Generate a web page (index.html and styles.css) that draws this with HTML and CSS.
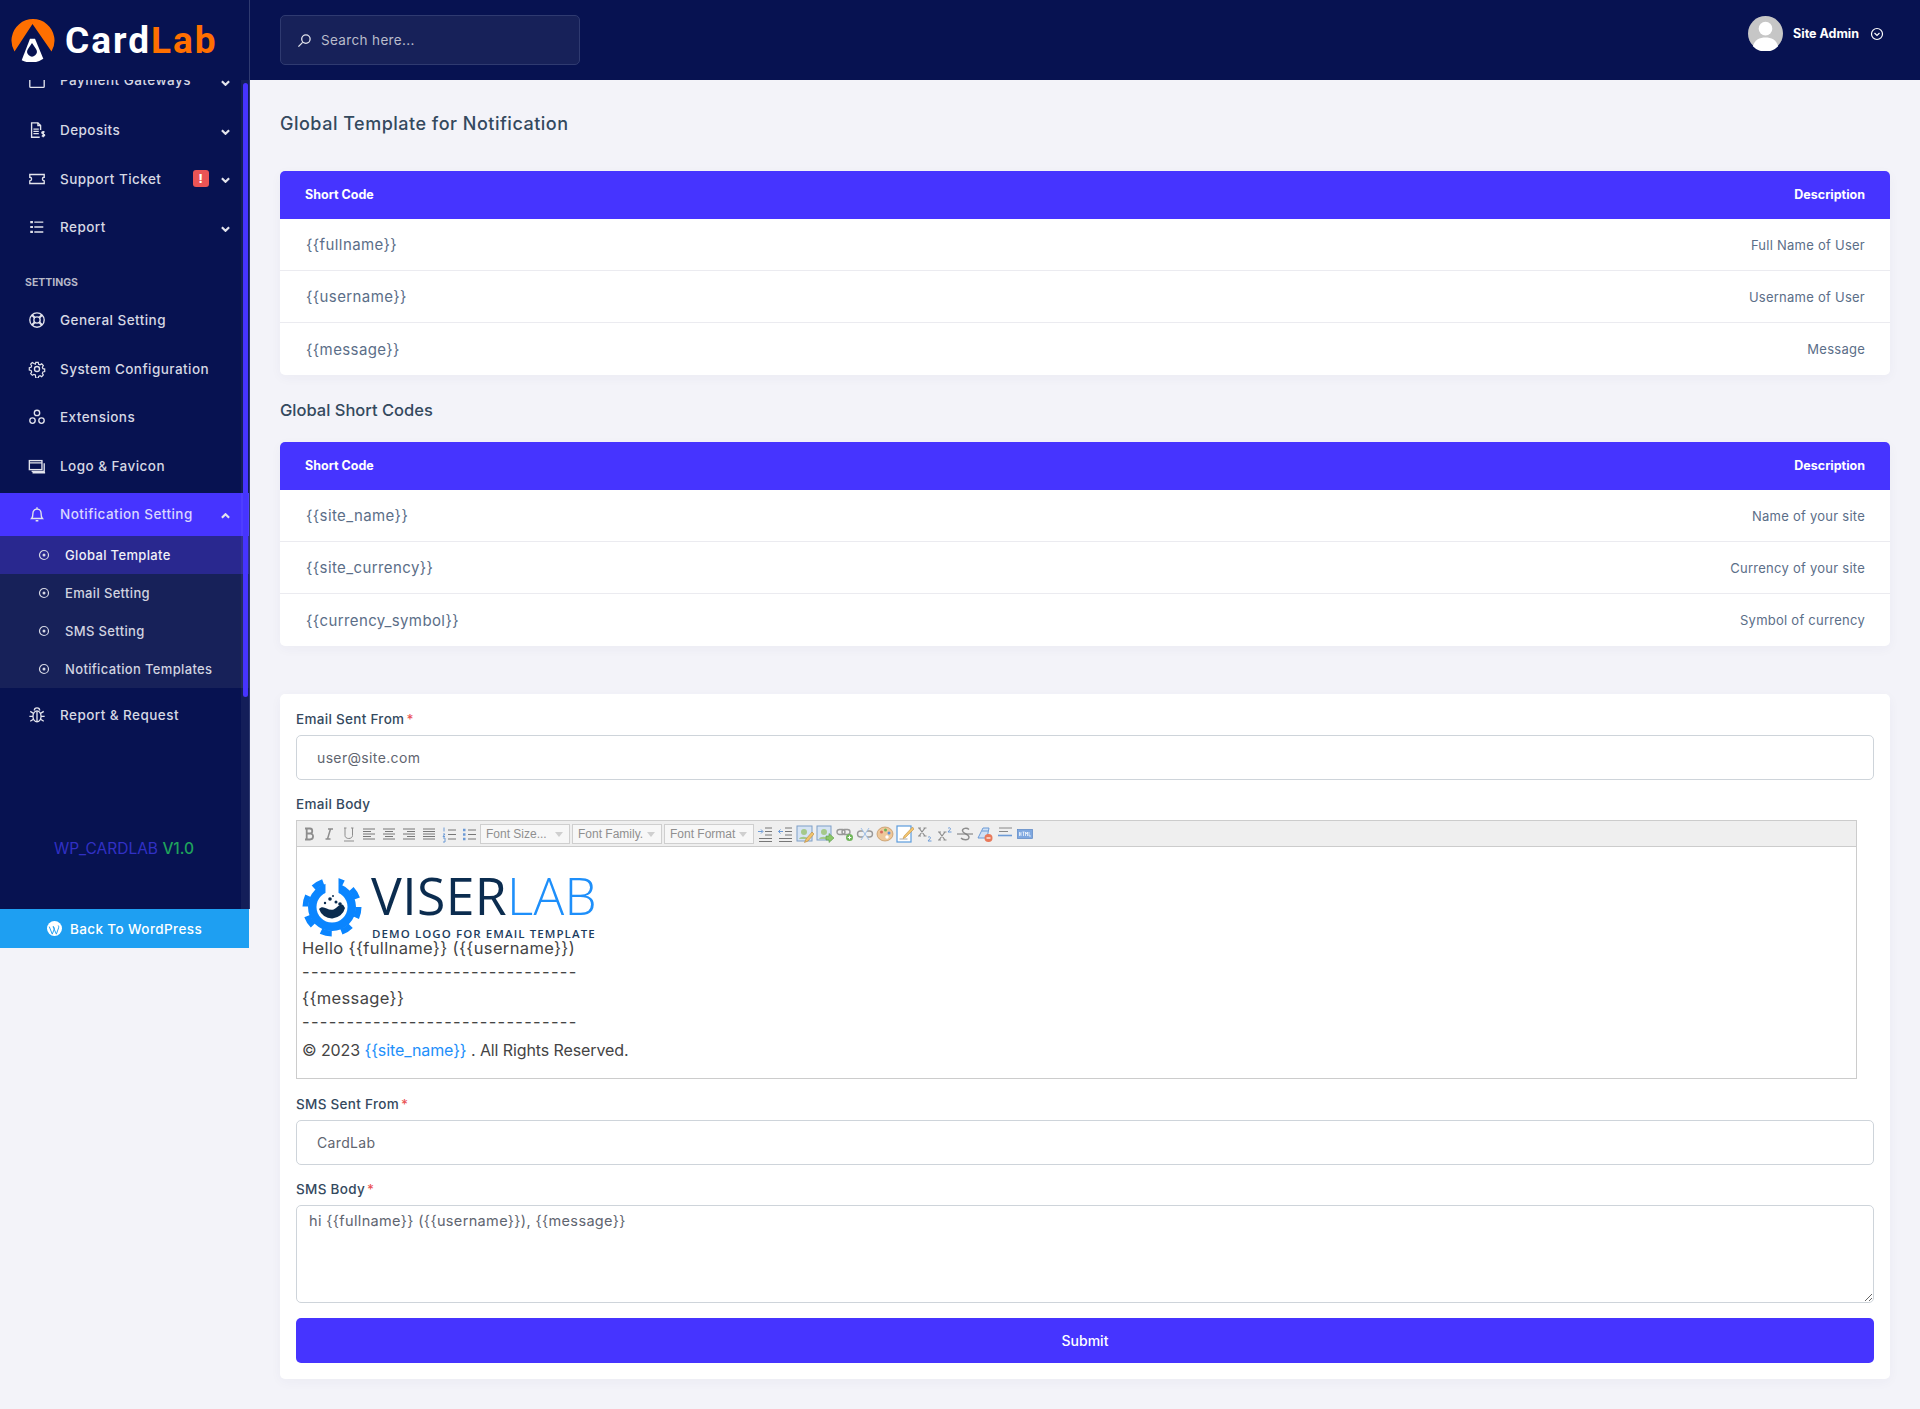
FILE: index.html
```html
<!DOCTYPE html>
<html lang="en">
<head>
    <meta charset="UTF-8">
    <meta name="viewport" content="width=device-width, initial-scale=1.0">
    <title>Global Template - CardLab</title>
    <link rel="stylesheet" href="styles.css">
</head>
<body>
<div class="app">

    <!-- Sidebar -->
    <aside class="sidebar">
        <div class="side-panel">
            <div class="brand">
                <svg class="brand-mark" viewBox="0 0 44 44">
                    <path d="M3.500 33.500A21.500 21.500 0 1 1 40.500 33.500L21.500 6z" fill="#ff6f00"/>
                    <path d="M19 20.700H24L32.300 40.700A22 22 0 0 1 10.700 42.300z" fill="#fff"/>
                    <path d="M21 25l4 6a4.800 4.800 0 1 1-8 0z" fill="#071251"/>
                </svg>
                <span class="brand-name">Card<b>Lab</b></span>
            </div>
            <div class="menu-area">
                <ul class="menu">
                    <li class="menu-row cut">
                        <svg class="mi" viewBox="0 0 20 20"><rect x="2" y="4" width="16" height="12" rx="1"/></svg>
                        <span class="ml">Payment Gateways</span><svg class="chev" viewBox="0 0 10 6"><path d="M1 1l4 4 4-4"/></svg>
                    </li>
                    <li class="menu-row">
                        <svg class="mi" viewBox="0 0 20 20"><path d="M13 18H4V2h7l3 3v5"/><path d="M11 2v3h3M6 9h6M6 11.500h6M6 14h6"/><path d="M18.500 12.500c-2-1.200-3.500-.3-3 .8s3.200 1 3 2.400-2 1.300-3.200.6M17 11v7"/></svg>
                        <span class="ml">Deposits</span><svg class="chev" viewBox="0 0 10 6"><path d="M1 1l4 4 4-4"/></svg>
                    </li>
                    <li class="menu-row">
                        <svg class="mi" viewBox="0 0 20 20"><path d="M2 5h16v3a2 2 0 0 0 0 4v3H2v-3a2 2 0 0 0 0-4z"/></svg>
                        <span class="ml">Support Ticket</span><span class="alert">!</span><svg class="chev" viewBox="0 0 10 6"><path d="M1 1l4 4 4-4"/></svg>
                    </li>
                    <li class="menu-row">
                        <svg class="mi" viewBox="0 0 20 20"><path d="M7 4.500h10M7 10h10M7 15.500h10"/><path class="thick" d="M2.500 4.500h3M2.500 10h3M2.500 15.500h3"/></svg>
                        <span class="ml">Report</span><svg class="chev" viewBox="0 0 10 6"><path d="M1 1l4 4 4-4"/></svg>
                    </li>

                    <li class="menu-title">SETTINGS</li>

                    <li class="menu-row">
                        <svg class="mi" viewBox="0 0 20 20"><circle cx="10" cy="10" r="8"/><circle cx="10" cy="10" r="3.500"/><path class="thick" d="M4.500 4.500l3 3M15.500 4.500l-3 3M4.500 15.500l3-3M15.500 15.500l-3-3"/></svg>
                        <span class="ml">General Setting</span>
                    </li>
                    <li class="menu-row">
                        <svg class="mi" viewBox="0 0 20 20"><path d="M8.500 2h3l.5 2.300 1.800.8 2-1.200 2 2.100-1.200 2 .7 1.800 2.200.5v3l-2.200.5-.7 1.800 1.200 2-2 2.100-2-1.200-1.800.8-.5 2.300h-3L8 17.600l-1.800-.8-2 1.200-2-2.100 1.200-2-.7-1.800L.5 11.600v-3l2.200-.5.7-1.800-1.200-2 2-2.100 2 1.200L8 4.300z" transform="translate(1 .8) scale(.9)"/><circle cx="10" cy="10" r="2.800"/></svg>
                        <span class="ml">System Configuration</span>
                    </li>
                    <li class="menu-row">
                        <svg class="mi" viewBox="0 0 20 20"><circle cx="10" cy="5.500" r="3"/><circle cx="5" cy="14" r="3"/><circle cx="15" cy="14" r="3"/></svg>
                        <span class="ml">Extensions</span>
                    </li>
                    <li class="menu-row">
                        <svg class="mi" viewBox="0 0 20 20"><rect x="1.500" y="4" width="14" height="10"/><path d="M1.500 6.500h14M4 16h14V7M5 17.500h14"/></svg>
                        <span class="ml">Logo &amp; Favicon</span>
                    </li>
                    <li class="menu-row active">
                        <svg class="mi" viewBox="0 0 20 20"><path d="M4 15c1.500-1.500 1.500-3 1.500-6a4.500 4.500 0 0 1 9 0c0 3 0 4.500 1.500 6z"/><path d="M10 2.500v2M8.500 17.500h3"/></svg>
                        <span class="ml">Notification Setting</span><svg class="chev" viewBox="0 0 10 6"><path d="M1 5l4-4 4 4"/></svg>
                    </li>
                    <li>
                        <ul class="submenu">
                            <li class="sub-row current"><svg class="di" viewBox="0 0 12 12"><circle cx="6" cy="6" r="4.500"/><circle class="dot" cx="6" cy="6" r="1.500"/></svg>Global Template</li>
                            <li class="sub-row"><svg class="di" viewBox="0 0 12 12"><circle cx="6" cy="6" r="4.500"/><circle class="dot" cx="6" cy="6" r="1.500"/></svg>Email Setting</li>
                            <li class="sub-row"><svg class="di" viewBox="0 0 12 12"><circle cx="6" cy="6" r="4.500"/><circle class="dot" cx="6" cy="6" r="1.500"/></svg>SMS Setting</li>
                            <li class="sub-row"><svg class="di" viewBox="0 0 12 12"><circle cx="6" cy="6" r="4.500"/><circle class="dot" cx="6" cy="6" r="1.500"/></svg>Notification Templates</li>
                        </ul>
                    </li>
                    <li class="menu-row">
                        <svg class="mi" viewBox="0 0 20 20"><ellipse cx="10" cy="11.500" rx="4.500" ry="6"/><path d="M7 5c0-4 6-4 6 0M10 6v11M1.500 11.500h4M14.500 11.500h4M2.500 6l4 2.500M17.500 6l-4 2.500M2.500 17l4-2.500M17.500 17l-4-2.500"/></svg>
                        <span class="ml">Report &amp; Request</span>
                    </li>
                </ul>
                <p class="version">WP_CARDLAB <span>V1.0</span></p>
                <div class="scroll-track"><div class="scroll-thumb"></div></div>
            </div>
        </div>
        <a class="back-btn">
            <svg class="wp" viewBox="0 0 20 20"><circle cx="10" cy="10" r="10" fill="#fff"/><path d="M3 7.500l4 10 3-7.500-1.500-3M8 7.500l4.500 10L15.500 9c.5-1.500-.2-2.500-.5-3" fill="none" stroke="#1e9ff2" stroke-width="1.300"/></svg>
            Back To WordPress
        </a>
    </aside>

    <!-- Main -->
    <div class="main">
        <header class="topbar">
            <div class="search">
                <svg class="search-icon" viewBox="0 0 16 16"><circle cx="9.500" cy="6.500" r="4.500"/><path d="M6 10l-4.500 4.500"/></svg>
                <span>Search here...</span>
            </div>
            <div class="user">
                <svg class="avatar" viewBox="0 0 36 36"><circle cx="18" cy="18" r="18" fill="#c6c6c6"/><circle cx="18" cy="13" r="7" fill="#fff"/><path d="M5 31c2-7 7-9 13-9s11 2 13 9a18 18 0 0 1-26 0z" fill="#fff"/></svg>
                <span class="user-name">Site Admin</span>
                <svg class="user-chev" viewBox="0 0 14 14"><circle cx="7" cy="7" r="5.500"/><path d="M4.500 6l2.500 2.500L9.500 6"/></svg>
            </div>
        </header>

        <div class="content">
            <h1 class="page-title">Global Template for Notification</h1>

            <div class="code-card">
                <div class="code-head"><span>Short Code</span><span>Description</span></div>
                <div class="code-row"><span class="code">{{fullname}}</span><span>Full Name of User</span></div>
                <div class="code-row"><span class="code">{{username}}</span><span>Username of User</span></div>
                <div class="code-row"><span class="code">{{message}}</span><span>Message</span></div>
            </div>

            <h2 class="sub-title">Global Short Codes</h2>

            <div class="code-card">
                <div class="code-head"><span>Short Code</span><span>Description</span></div>
                <div class="code-row"><span class="code">{{site_name}}</span><span>Name of your site</span></div>
                <div class="code-row"><span class="code">{{site_currency}}</span><span>Currency of your site</span></div>
                <div class="code-row"><span class="code">{{currency_symbol}}</span><span>Symbol of currency</span></div>
            </div>

            <!-- Form -->
            <form class="form-card">
                <div class="form-group">
                    <label>Email Sent From<em>*</em></label>
                    <div class="field">user@site.com</div>
                </div>

                <div class="form-group">
                    <label class="short">Email Body</label>
                    <div class="editor">
                        <div class="toolbar">
                            <svg class="tb" viewBox="0 0 18 18"><path class="gl" d="M5 3.500h5c3 0 3 5 0 5H6.500 10.500c3.500 0 3.500 6-.5 6H5M6.700 3.500v11" stroke-width="1.800"/></svg>
                            <svg class="tb" viewBox="0 0 18 18"><path class="gl" d="M8 4h5M5.500 14h5M10.500 4l-3 10" stroke-width="1.500"/></svg>
                            <svg class="tb" viewBox="0 0 18 18"><path class="gl" d="M5 3v7.500c0 4 7.500 4 7.500 0V3M4 3h2.500M11 3h2.500M4 16h10" stroke-width="1"/></svg>
                            <svg class="tb" viewBox="0 0 18 18"><path class="ln" d="M3 4h12M3 6.500h8M3 9h12M3 11.500h8M3 14h12"/></svg>
                            <svg class="tb" viewBox="0 0 18 18"><path class="ln" d="M3 4h12M5 6.500h8M3 9h12M5 11.500h8M3 14h12"/></svg>
                            <svg class="tb" viewBox="0 0 18 18"><path class="ln" d="M3 4h12M7 6.500h8M3 9h12M7 11.500h8M3 14h12"/></svg>
                            <svg class="tb" viewBox="0 0 18 18"><path class="ln" d="M3 4h12M3 6.500h12M3 9h12M3 11.500h12M3 14h12"/></svg>
                            <svg class="tb" viewBox="0 0 18 18"><path class="ln" d="M8 5h8M8 9.500h8M8 14h8"/><path class="bl" d="M4 2.500v4M3 9h2l-2 2.500h2M3 13h2v4H3"/></svg>
                            <svg class="tb" viewBox="0 0 18 18"><path class="ln" d="M8 5h8M8 9.500h8M8 14h8"/><path class="bb" d="M3 5h2.500M3 9.500h2.500M3 14h2.500"/></svg>
                            <div class="nic-select size">Font Size...<i></i></div>
                            <div class="nic-select">Font Family.<i></i></div>
                            <div class="nic-select format">Font Format<i></i></div>
                            <svg class="tb" viewBox="0 0 18 18"><path class="ln" d="M9 3h7M9 6.500h7M9 10h7M3 13.500h13M3 16.500h13"/><path class="bl" d="M2 6.500h4.500M5 4.500l2 2-2 2"/></svg>
                            <svg class="tb" viewBox="0 0 18 18"><path class="ln" d="M9 3h7M9 6.500h7M9 10h7M3 13.500h13M3 16.500h13"/><path class="bl" d="M2.500 6.500H7M4.500 4.500l-2 2 2 2"/></svg>
                            <svg class="tb" viewBox="0 0 18 18"><rect x="1" y="1" width="15" height="15" fill="#d6e4f4" stroke="#7f9fc7"/><circle cx="8" cy="7" r="3" fill="#a5c98b"/><path d="M3 14c1-3 8-3 9 0z" fill="#a5c98b"/><path d="M16 7l-6 7-1.500 3.500L12 16l6-7z" fill="#f2c46d" stroke="#b8863a" stroke-width=".6"/></svg>
                            <svg class="tb" viewBox="0 0 18 18"><rect x="1" y="1" width="14" height="14" fill="#d6e4f4" stroke="#7f9fc7"/><circle cx="8" cy="7" r="3" fill="#a5c98b"/><path d="M3 14c1-3 8-3 9 0z" fill="#a5c98b"/><path d="M10 11h3V8.500L18 13l-5 4.500V15h-3z" fill="#8cc76a" stroke="#5b9c44" stroke-width=".6"/></svg>
                            <svg class="tb" viewBox="0 0 18 18"><rect x="1" y="4.500" width="8" height="5" rx="2.500" fill="none" stroke="#999" stroke-width="1.400"/><rect x="6" y="4.500" width="8" height="5" rx="2.500" fill="none" stroke="#999" stroke-width="1.400"/><circle cx="13.500" cy="12.500" r="3.500" fill="#6fb55a"/><path d="M11.700 12.500h3.600M13.500 10.700v3.600" stroke="#fff"/></svg>
                            <svg class="tb" viewBox="0 0 18 18"><path d="M7 6H4.500a3 3 0 0 0 0 6H7M11 6h2.500a3 3 0 0 1 0 6H11" fill="none" stroke="#999" stroke-width="1.400"/><path d="M5 3l8 12M13 3L5 15" stroke="#9fc0e8"/></svg>
                            <svg class="tb" viewBox="0 0 18 18"><ellipse cx="9" cy="9" rx="8" ry="7" fill="#eec79a" stroke="#c0905a" stroke-width=".7"/><circle cx="5.500" cy="7" r="1.500" fill="#d96a5a"/><circle cx="9.500" cy="5" r="1.500" fill="#6fb55a"/><circle cx="13" cy="8" r="1.500" fill="#5a8fd9"/><circle cx="11" cy="12" r="1.700" fill="#fff"/></svg>
                            <svg class="tb" viewBox="0 0 18 18"><rect x="1" y="1" width="14" height="16" fill="#fff" stroke="#5b9bdc" stroke-width="1.200"/><path d="M3.500 14h8" stroke="#aaa"/><path d="M16.500 2L8 11l-1 2.500 2.500-1L18 4z" fill="#f2c46d" stroke="#b8863a" stroke-width=".5"/></svg>
                            <svg class="tb" viewBox="0 0 18 18"><path class="gl" d="M3 3l6 8M9 3l-6 8M2 3h3M7.500 3h3M2 11h3M7.500 11h3" stroke-width="1.200"/><path class="bl" d="M12 12.500c1-1.300 3-.7 2.300.8L12 16h3.500"/></svg>
                            <svg class="tb" viewBox="0 0 18 18"><path class="gl" d="M3 7l6 8M9 7l-6 8M2 7h3M7.500 7h3M2 15h3M7.500 15h3" stroke-width="1.200"/><path class="bl" d="M12 3.500c1-1.300 3-.7 2.300.8L12 7h3.500"/></svg>
                            <svg class="tb" viewBox="0 0 18 18"><path class="gl" d="M13 4.500C11 2.500 6 3 6.500 6s7 3 6.500 6.500-6.500 2.500-8 .5" stroke-width="1.400"/><path class="ln" d="M1 9h16"/></svg>
                            <svg class="tb" viewBox="0 0 18 18"><path d="M2 13l5-10h6l-2 10zM6 6h6" fill="#cfe0f5" stroke="#6d9bd6"/><circle cx="12.500" cy="13" r="4" fill="#e8795a"/><path d="M10.500 13h4" stroke="#fff" stroke-width="1.200"/></svg>
                            <svg class="tb" viewBox="0 0 18 18"><path d="M3 3h13" stroke="#888"/><path d="M3 6.500h9" stroke="#888"/><path d="M2 10.500h14" stroke="#6d9bd6" stroke-width="1.600"/></svg>
                            <svg class="tb" viewBox="0 0 18 18"><rect x="1.500" y="4.500" width="15" height="9" fill="#7fa8e0" stroke="#5b85c4" stroke-width=".7"/><path d="M3.500 7v4M5 7v4M3.500 9H5M6.500 7h2M7.500 7v4M9.500 11V7l1 2 1-2v4M13 7v4h2" stroke="#fff" stroke-width=".7" fill="none"/></svg>
                        </div>
                        <div class="editor-body">
                            <svg class="mail-logo" viewBox="0 0 300 65">
                                <g transform="translate(30 31)">
                                    <circle r="24" fill="#0a85ff"/>
                                    <circle r="26.500" fill="none" stroke="#0a85ff" stroke-width="6" stroke-dasharray="11 9.810"/>
                                    <rect x="-6.500" y="-31" width="13" height="20" fill="#fff"/>
                                    <circle r="15.500" fill="#fff"/>
                                    <path d="M-13 2C-8-4-3 7 4 1S11-2 13 1A13.500 13.500 0 0 1-13 2z" fill="#0b2c4f"/>
                                    <circle cx="-2" cy="-8" r="1.800" fill="#0b2c4f"/><circle cx="4" cy="-5" r="1.500" fill="#0b2c4f"/><circle cx="-7" cy="-4" r="1.200" fill="#0b2c4f"/><circle cx="1" cy="-11" r="1" fill="#0b2c4f"/><circle cx="8" cy="-3" r="1.800" fill="#0b2c4f"/>
                                </g>
                                <text class="logo-a" x="69" y="39" textLength="136" lengthAdjust="spacingAndGlyphs">VISER</text>
                                <text class="logo-b" x="205" y="39" textLength="90" lengthAdjust="spacingAndGlyphs">LAB</text>
                                <text class="logo-c" x="70" y="62" textLength="223">DEMO LOGO FOR EMAIL TEMPLATE</text>
                            </svg>
                            <p class="hello">Hello {{fullname}} ({{username}})</p>
                            <p class="rule">-------------------------------</p>
                            <p class="msg">{{message}}</p>
                            <p class="rule">-------------------------------</p>
                            <p class="copy">© 2023 <a>{{site_name}}</a> . All Rights Reserved.</p>
                        </div>
                    </div>
                </div>

                <div class="form-group">
                    <label>SMS Sent From<em>*</em></label>
                    <div class="field">CardLab</div>
                </div>

                <div class="form-group">
                    <label class="short">SMS Body<em>*</em></label>
                    <textarea class="sms-body" readonly>hi {{fullname}} ({{username}}), {{message}}</textarea>
                </div>

                <button class="submit" type="button">Submit</button>
            </form>
        </div>
    </div>
</div>
</body>
</html>
```

FILE: styles.css
```css
* {
    box-sizing: border-box;
}
body {
    margin: 0;
    background-color: #f3f3f9;
    font-family: Inter, "Open Sans", sans-serif;
    color: #5b6e88;
}
ul {
    list-style: none;
    margin: 0;
    padding: 0;
}
.app {
    display: flex;
    align-items: flex-start;
    height: 1409px;
    overflow: hidden;
}

/* sidebar */
.sidebar {
    width: 250px;
    flex-shrink: 0;
}
.side-panel {
    height: 909px;
    background-color: #071251;
    border-right: 1px solid #2f3a70;
    display: flex;
    flex-direction: column;
}
.brand {
    height: 80px;
    flex-shrink: 0;
    display: flex;
    align-items: center;
    padding-left: 11px;
    gap: 10px;
}
.brand-mark {
    width: 44px;
    height: 44px;
}
.brand-name {
    font-family: "Roboto", sans-serif;
    font-weight: 700;
    font-size: 37px;
    letter-spacing: 2px;
    color: #fff;
}
.brand-name b {
    color: #ff6f00;
    font-weight: 700;
}
.menu-area {
    position: relative;
    flex: 1;
    overflow: hidden;
}
.menu {
    margin-top: -21px;
    padding-top: 1px;
}
.menu-row {
    height: 43px;
    margin-bottom: 5.5px;
    display: flex;
    align-items: center;
    padding: 0 16px 0 28px;
    font-size: 13.500px;
    font-weight: 500;
    letter-spacing: 0.45px;
    color: #d6d8e4;
}
.menu-row .ml {
    margin-left: 14px;
}
.menu-row.cut .ml {
    margin-bottom: 4px;
}
.mi {
    width: 18px;
    height: 18px;
    flex-shrink: 0;
    fill: none;
    stroke: #e2e3ec;
    stroke-width: 1.500;
}
.mi .thick {
    stroke-width: 2.400;
}
.chev {
    width: 9px;
    height: 6px;
    margin-left: auto;
    margin-top: 3px;
    margin-right: 3px;
    fill: none;
    stroke: #e2e3ec;
    stroke-width: 2.400;
}
.alert {
    width: 16px;
    height: 17px;
    margin-left: auto;
    border-radius: 3px;
    background-color: #ea5455;
    color: #fff;
    font-size: 12px;
    font-weight: 800;
    text-align: center;
    line-height: 17px;
}
.alert + .chev {
    margin-left: 12px;
}
.menu-title {
    height: 44.500px;
    padding: 22px 0 0 25px;
    font-size: 10.500px;
    font-weight: 700;
    color: #b6b8c8;
}
.menu-row.active {
    background-color: #4634ff;
    color: #d9d6ff;
    margin-bottom: 0;
}
.submenu {
    margin-bottom: 5.5px;
    background-color: #172159;
}
.sub-row {
    height: 38px;
    display: flex;
    align-items: center;
    padding-left: 38px;
    gap: 15px;
    font-size: 13px;
    font-weight: 500;
    letter-spacing: 0.35px;
    color: #d2d4e0;
}
.sub-row.current {
    background-color: #29288f;
    color: #f1f1f8;
}
.di {
    width: 12px;
    height: 12px;
    fill: none;
    stroke: #d6d8e4;
    stroke-width: 1.200;
}
.di .dot {
    fill: #d6d8e4;
    stroke: none;
}
.version {
    margin: 103px 0 0;
    padding-right: 1px;
    text-align: center;
    font-size: 15.500px;
    color: #3130c4;
}
.version span {
    color: #1fa35c;
    font-weight: 500;
}
.scroll-track {
    position: absolute;
    top: 0;
    right: 0;
    bottom: 0;
    width: 8px;
    background-color: rgba(255, 255, 255, 0.05);
}
.scroll-thumb {
    height: 614px;
    width: 5px;
    margin: 3px 0 0 2px;
    border-radius: 3px;
    background-color: #4634ff;
}
.back-btn {
    display: flex;
    align-items: center;
    justify-content: center;
    gap: 8px;
    width: 249px;
    height: 39px;
    background-color: #1e9ff2;
    color: #fff;
    font-size: 13.500px;
    font-weight: 500;
    letter-spacing: 0.4px;
}
.wp {
    width: 15px;
    height: 15px;
}

/* top bar */
.main {
    flex: 1;
    min-width: 0;
}
.topbar {
    height: 80px;
    background-color: #071251;
    display: flex;
    align-items: center;
    justify-content: space-between;
    padding: 0 30px;
}
.search {
    width: 300px;
    height: 50px;
    display: flex;
    align-items: center;
    gap: 9px;
    padding-left: 16px;
    background-color: #172159;
    border: 1px solid #2f3a70;
    border-radius: 5px;
    color: #b9bccb;
    font-size: 13.500px;
    letter-spacing: 0.35px;
}
.search-icon {
    width: 15px;
    height: 15px;
    fill: none;
    stroke: #e2e3ec;
    stroke-width: 1.400;
}
.user {
    display: flex;
    align-items: center;
    margin: 0 6px 13px 0;
    color: #fff;
}
.avatar {
    width: 35px;
    height: 35px;
}
.user-name {
    margin-left: 10px;
    font-size: 12.500px;
    font-weight: 700;
}
.user-chev {
    width: 14px;
    height: 14px;
    margin-left: 11px;
    fill: none;
    stroke: #fff;
    stroke-width: 1.200;
}

/* content */
.content {
    padding: 0 30px 30px;
}
.page-title {
    margin: 0;
    height: 91px;
    padding-top: 33px;
    font-size: 18px;
    font-weight: 500;
    letter-spacing: 0.5px;
    color: #34495e;
}
.sub-title {
    margin: 0;
    height: 67px;
    padding-top: 25px;
    font-size: 16.500px;
    font-weight: 500;
    color: #34495e;
}
.code-card {
    background-color: #fff;
    border-radius: 5px;
    box-shadow: 0 3px 12px rgba(40, 40, 90, 0.04);
    overflow: hidden;
}
.code-head {
    height: 48px;
    display: flex;
    align-items: center;
    justify-content: space-between;
    padding: 0 25px 1px;
    background-color: #4634ff;
    color: #fff;
    font-size: 12.500px;
    font-weight: 700;
}
.code-row {
    height: 52px;
    display: flex;
    align-items: center;
    justify-content: space-between;
    padding: 0 25px 0 26px;
    border-bottom: 1px solid #ebebf0;
    font-size: 13px;
    letter-spacing: 0.25px;
}
.code-row:last-child {
    border-bottom: none;
}
.code {
    font-size: 15px;
    letter-spacing: 0.4px;
}

/* form */
.form-card {
    margin-top: 48px;
    padding: 16px;
    background-color: #fff;
    border-radius: 5px;
    box-shadow: 0 3px 12px rgba(40, 40, 90, 0.04);
}
.form-group {
    margin-bottom: 16px;
}
label {
    display: block;
    height: 25px;
    padding-top: 1px;
    font-size: 13.500px;
    font-weight: 500;
    letter-spacing: 0.3px;
    color: #34495e;
}
label.short {
    height: 24px;
    padding-top: 0;
}
label em {
    margin-left: 2px;
    font-style: normal;
    color: #ea5455;
}
.field {
    height: 45px;
    display: flex;
    align-items: center;
    padding-left: 20px;
    border: 1px solid #ced4da;
    border-radius: 5px;
    font-size: 14px;
    letter-spacing: 0.35px;
    color: #5f6570;
}
.editor {
    width: 1561px;
    height: 259px;
    border: 1px solid #cccccc;
}
.toolbar {
    height: 26px;
    display: flex;
    align-items: center;
    padding-left: 2px;
    background-color: #efefef;
    border-bottom: 1px solid #cccccc;
}
.tb {
    width: 18px;
    height: 18px;
    margin: 0 1px;
    flex-shrink: 0;
    fill: none;
}
.gl {
    stroke: #8d8d8d;
    fill: none;
}
.ln {
    stroke: #777;
    stroke-width: 1;
    fill: none;
}
.bl {
    stroke: #6d9bd6;
    stroke-width: 1;
    fill: none;
}
.bb {
    stroke: #6d9bd6;
    stroke-width: 2.400;
    fill: none;
}
.nic-select {
    position: relative;
    width: 90px;
    height: 20px;
    margin-right: 2px;
    padding-left: 5px;
    background-color: #f7f7f7;
    border: 1px solid #cfcfcf;
    font-family: "Liberation Sans", sans-serif;
    font-size: 12px;
    line-height: 18px;
    color: #8f8f8f;
}
.nic-select.size {
    margin-left: 1px;
}
.nic-select.format {
    margin-right: 1px;
}
.nic-select i {
    position: absolute;
    top: 7px;
    right: 6px;
    border-left: 4px solid transparent;
    border-right: 4px solid transparent;
    border-top: 5px solid #cfcfcf;
}
.editor-body {
    padding: 29px 5px 0;
    color: #444;
    font-size: 16.500px;
    letter-spacing: 0.35px;
}
.editor-body p {
    margin: 0;
}
.mail-logo {
    display: block;
    width: 300px;
    height: 65px;
    overflow: visible;
}
.logo-a {
    font-family: "Open Sans", sans-serif;
    font-size: 52px;
    font-weight: 400;
    fill: #0b2c4f;
}
.logo-b {
    font-family: "Open Sans", sans-serif;
    font-size: 52px;
    font-weight: 300;
    fill: #1e8ffa;
}
.logo-c {
    font-family: "Open Sans", sans-serif;
    font-size: 11.500px;
    font-weight: 600;
    fill: #1c3c5e;
}
.hello {
    height: 21px;
    line-height: 14px;
}
.rule {
    height: 24px;
    line-height: 20px;
    letter-spacing: 1.300px;
}
.msg {
    height: 26px;
    line-height: 25px;
}
.copy {
    margin-top: 3px;
    font-size: 16px;
    letter-spacing: -0.1px;
    line-height: 28px;
}
.copy a {
    color: #1e8ffa;
}
.sms-body {
    display: block;
    width: 100%;
    height: 98px;
    padding: 6px 12px;
    border: 1px solid #ced4da;
    border-radius: 5px;
    font-family: inherit;
    font-size: 14.500px;
    letter-spacing: 0.35px;
    color: #5f6570;
    outline: none;
}
.submit {
    display: block;
    width: 100%;
    height: 45px;
    margin-top: -1px;
    border: none;
    border-radius: 5px;
    background-color: #4634ff;
    color: #fff;
    font-family: inherit;
    font-size: 14px;
    font-weight: 500;
}
```
